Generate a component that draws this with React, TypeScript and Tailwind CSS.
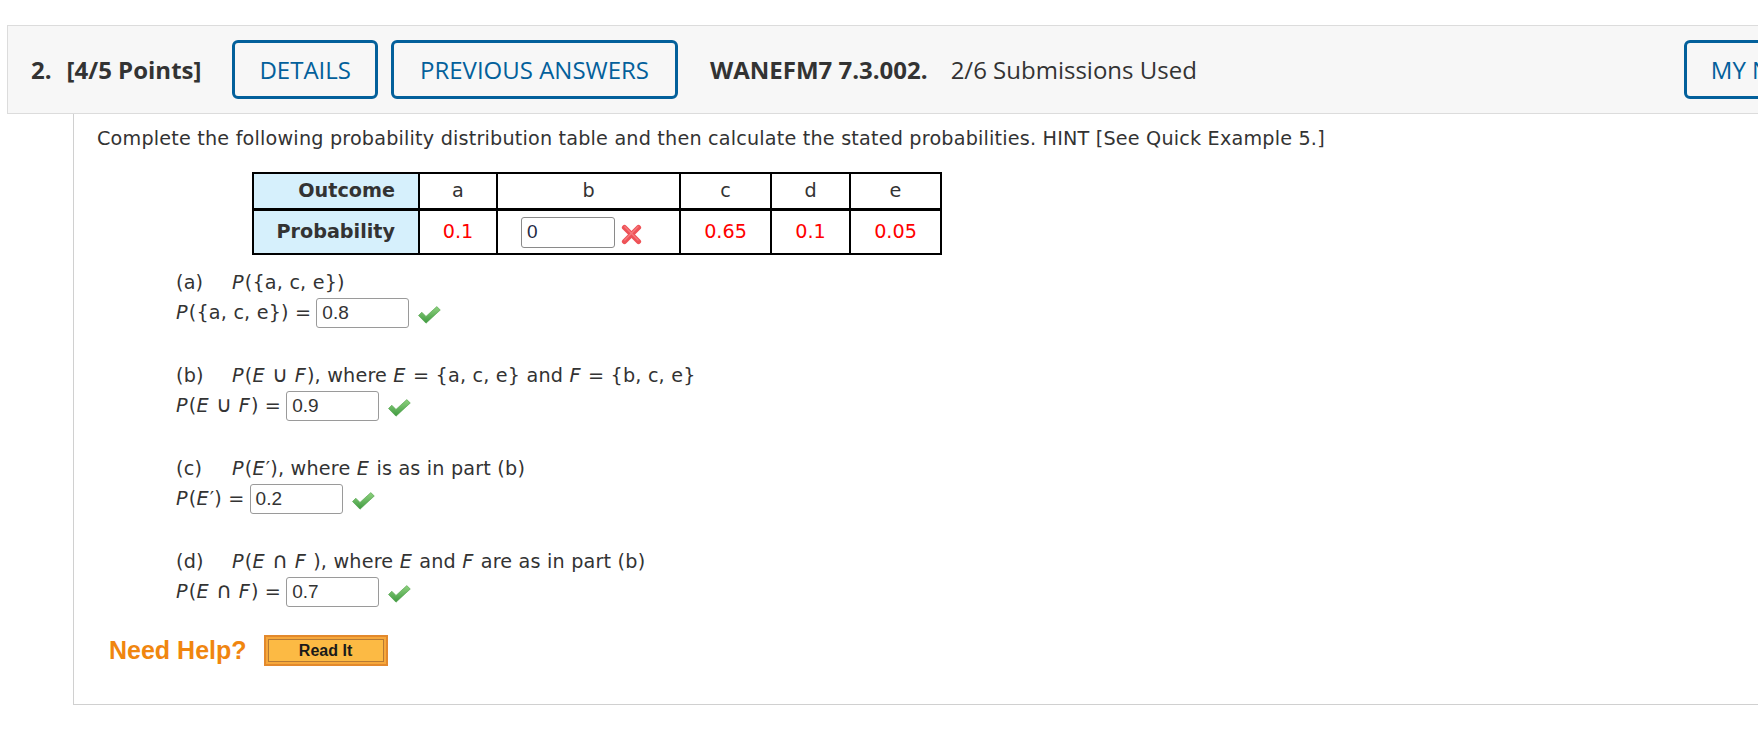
import React from "react";

const body = "font-['DejaVu_Sans',Verdana,sans-serif]";

function CheckMark() {
  return (
    <svg width="23" height="18" viewBox="0 0 23 18" className="ml-[9px] mt-[4px] shrink-0">
      <defs>
        <linearGradient id="chk" x1="0" y1="0" x2="0" y2="1">
          <stop offset="0" stopColor="#8fd27f" />
          <stop offset="1" stopColor="#3f9a40" />
        </linearGradient>
      </defs>
      <path d="M0.5 9.5 L3.8 6.2 L8 10.4 L18.8 0.6 L22.3 4 L8 17.2 Z" fill="url(#chk)" stroke="#4c9e45" strokeWidth="0.6" strokeLinejoin="round" />
    </svg>
  );
}

function RedX() {
  return (
    <svg width="21" height="21" viewBox="0 0 21 21" className="ml-[6px] mt-[5px] shrink-0">
      <g stroke="#ee5257" strokeWidth="5.2" strokeLinecap="round">
        <line x1="3.5" y1="3.5" x2="17.5" y2="17.5" />
        <line x1="17.5" y1="3.5" x2="3.5" y2="17.5" />
      </g>
      <g stroke="#f8898c" strokeWidth="1.4" strokeLinecap="round" opacity="0.7">
        <line x1="3.8" y1="2.8" x2="17" y2="16" />
        <line x1="17" y1="2.8" x2="3.8" y2="16" />
      </g>
    </svg>
  );
}

function Answer({ value }: { value: string }) {
  return (
    <div className="ml-[5px] flex h-[30px] w-[93px] shrink-0 items-center rounded-[3px] border border-[#9a9a9a] bg-white pl-[5px] font-['Liberation_Sans',Arial,sans-serif] text-[19px] tracking-normal text-[#333]">
      {value}
    </div>
  );
}

const V = ({ children }: { children: React.ReactNode }) => <i className="pr-[1px]">{children}</i>;
const Op = ({ children }: { children: React.ReactNode }) => <span className="text-[22px] leading-none">{children}</span>;

function Part({
  label,
  question,
  lhs,
  value,
  first,
}: {
  label: string;
  question: React.ReactNode;
  lhs: React.ReactNode;
  value: string;
  first?: boolean;
}) {
  return (
    <div className={first ? "" : "mt-[33px]"}>
      <div className="flex h-[27px] items-end leading-[24px]">
        <span className="w-[56px] shrink-0">{label}</span>
        <span className="whitespace-nowrap">{question}</span>
      </div>
      <div className="mt-[3px] flex h-[30px] items-center">
        <span className="whitespace-pre">{lhs}</span>
        <Answer value={value} />
        <CheckMark />
      </div>
    </div>
  );
}

function HeaderButton({ children, px = "px-[24px]" }: { children: React.ReactNode; px?: string }) {
  return (
    <div className={`flex h-[59px] shrink-0 items-center rounded-[6px] border-[3px] border-[#03609b] ${px} text-[#03609b] whitespace-nowrap`}>
      {children}
    </div>
  );
}

export default function App() {
  const cols = [
    { w: "w-[78px]", head: "a", val: "0.1" },
    { w: "w-[183px]", head: "b", val: null },
    { w: "w-[91px]", head: "c", val: "0.65" },
    { w: "w-[79px]", head: "d", val: "0.1" },
    { w: "w-[89px]", head: "e", val: "0.05" },
  ];

  return (
    <div className="h-[733px] w-full overflow-hidden bg-white">
      <div className="w-[2200px] pt-[25px]">
        {/* question header bar */}
        <div className="ml-[7px] flex h-[89px] items-center border border-[#dcdcdc] bg-[#f7f7f7] pl-[23px] font-['Open_Sans',sans-serif] text-[24px] text-[#333]">
          <span className="font-bold">2.</span>
          <span className="ml-[15px] font-bold">[4/5 Points]</span>
          <div className="ml-[31px]">
            <HeaderButton>DETAILS</HeaderButton>
          </div>
          <div className="ml-[13px]">
            <HeaderButton px="px-[26px]">PREVIOUS ANSWERS</HeaderButton>
          </div>
          <span className="ml-[32px] font-bold whitespace-nowrap">WANEFM7 7.3.002.</span>
          <span className="ml-[23px] whitespace-nowrap">2/6 Submissions Used</span>
          <div className="ml-[487px] flex gap-[14px]">
            <HeaderButton>MY NOTES</HeaderButton>
            <HeaderButton>ASK YOUR TEACHER</HeaderButton>
          </div>
        </div>

        {/* question body */}
        <div className={`ml-[73px] border-b border-l border-[#d0d0d0] pt-[12.5px] pb-[38px] pl-[23px] ${body} text-[19.2px] tracking-[0.19px] text-[#333]`}>
          <p className="h-[24px] leading-[24px] whitespace-nowrap">
            Complete the following probability distribution table and then calculate the stated probabilities. HINT [See Quick
            Example 5.]
          </p>

          {/* distribution table */}
          <div className="mt-[21.5px] ml-[155px] inline-flex flex-col border-2 border-black tracking-normal">
            <div className="flex h-[37px] border-b-[3px] border-black">
              <div className="flex w-[166px] items-center justify-end border-r-2 border-black bg-[#d6f0fc] pr-[23px] font-bold">
                Outcome
              </div>
              {cols.map((c, i) => (
                <div
                  key={c.head}
                  className={`${c.w} flex items-center justify-center ${i < cols.length - 1 ? "border-r-2 border-black" : ""}`}
                >
                  {c.head}
                </div>
              ))}
            </div>
            <div className="flex h-[42px]">
              <div className="flex w-[166px] items-center justify-end border-r-2 border-black bg-[#d6f0fc] pr-[23px] font-bold">
                Probability
              </div>
              {cols.map((c, i) => (
                <div
                  key={c.head}
                  className={`${c.w} flex items-center ${c.val ? "justify-center text-[#ff0000]" : "pl-[23px]"} ${i < cols.length - 1 ? "border-r-2 border-black" : ""}`}
                >
                  {c.val ?? (
                    <>
                      <div className="flex h-[31px] w-[94px] items-center rounded-[3px] border border-[#8a8a8a] bg-white pl-[5px] font-['Liberation_Sans',Arial,sans-serif] text-[19px] text-[#1f2a44]">
                        0
                      </div>
                      <RedX />
                    </>
                  )}
                </div>
              ))}
            </div>
          </div>

          {/* parts */}
          <div className="mt-[13px] ml-[79px]">
            <Part
              first
              label="(a)"
              question={
                <>
                  <V>P</V>({"{"}a, c, e{"}"})
                </>
              }
              lhs={
                <>
                  <V>P</V>({"{"}a, c, e{"}"}) =
                </>
              }
              value="0.8"
            />
            <Part
              label="(b)"
              question={
                <>
                  <V>P</V>(<V>E</V> <Op>∪</Op> <V>F</V>), where <V>E</V> = {"{"}a, c, e{"}"} and <V>F</V> = {"{"}b, c, e{"}"}
                </>
              }
              lhs={
                <>
                  <V>P</V>(<V>E</V> <Op>∪</Op> <V>F</V>) =
                </>
              }
              value="0.9"
            />
            <Part
              label="(c)"
              question={
                <>
                  <V>P</V>(<V>E</V>′), where <V>E</V> is as in part (b)
                </>
              }
              lhs={
                <>
                  <V>P</V>(<V>E</V>′) =
                </>
              }
              value="0.2"
            />
            <Part
              label="(d)"
              question={
                <>
                  <V>P</V>(<V>E</V> <Op>∩</Op> <V>F</V> ), where <V>E</V> and <V>F</V> are as in part (b)
                </>
              }
              lhs={
                <>
                  <V>P</V>(<V>E</V> <Op>∩</Op> <V>F</V>) =
                </>
              }
              value="0.7"
            />
          </div>

          {/* need help */}
          <div className="mt-[28px] ml-[12px] flex h-[31px] items-center tracking-normal">
            <span className="font-['Liberation_Sans',Arial,sans-serif] text-[25px] font-bold text-[#f0860f]">Need Help?</span>
            <div className="ml-[17px] h-[31px] w-[124px] border-2 border-[#e3892c] bg-[#f6a83c] p-[2px]">
              <div className="flex h-full w-full items-center justify-center border border-[#b67a34] bg-[#fcba44] font-['Liberation_Sans',Arial,sans-serif] text-[16px] font-bold text-[#1a1a1a]">
                Read It
              </div>
            </div>
          </div>
        </div>
      </div>
    </div>
  );
}
